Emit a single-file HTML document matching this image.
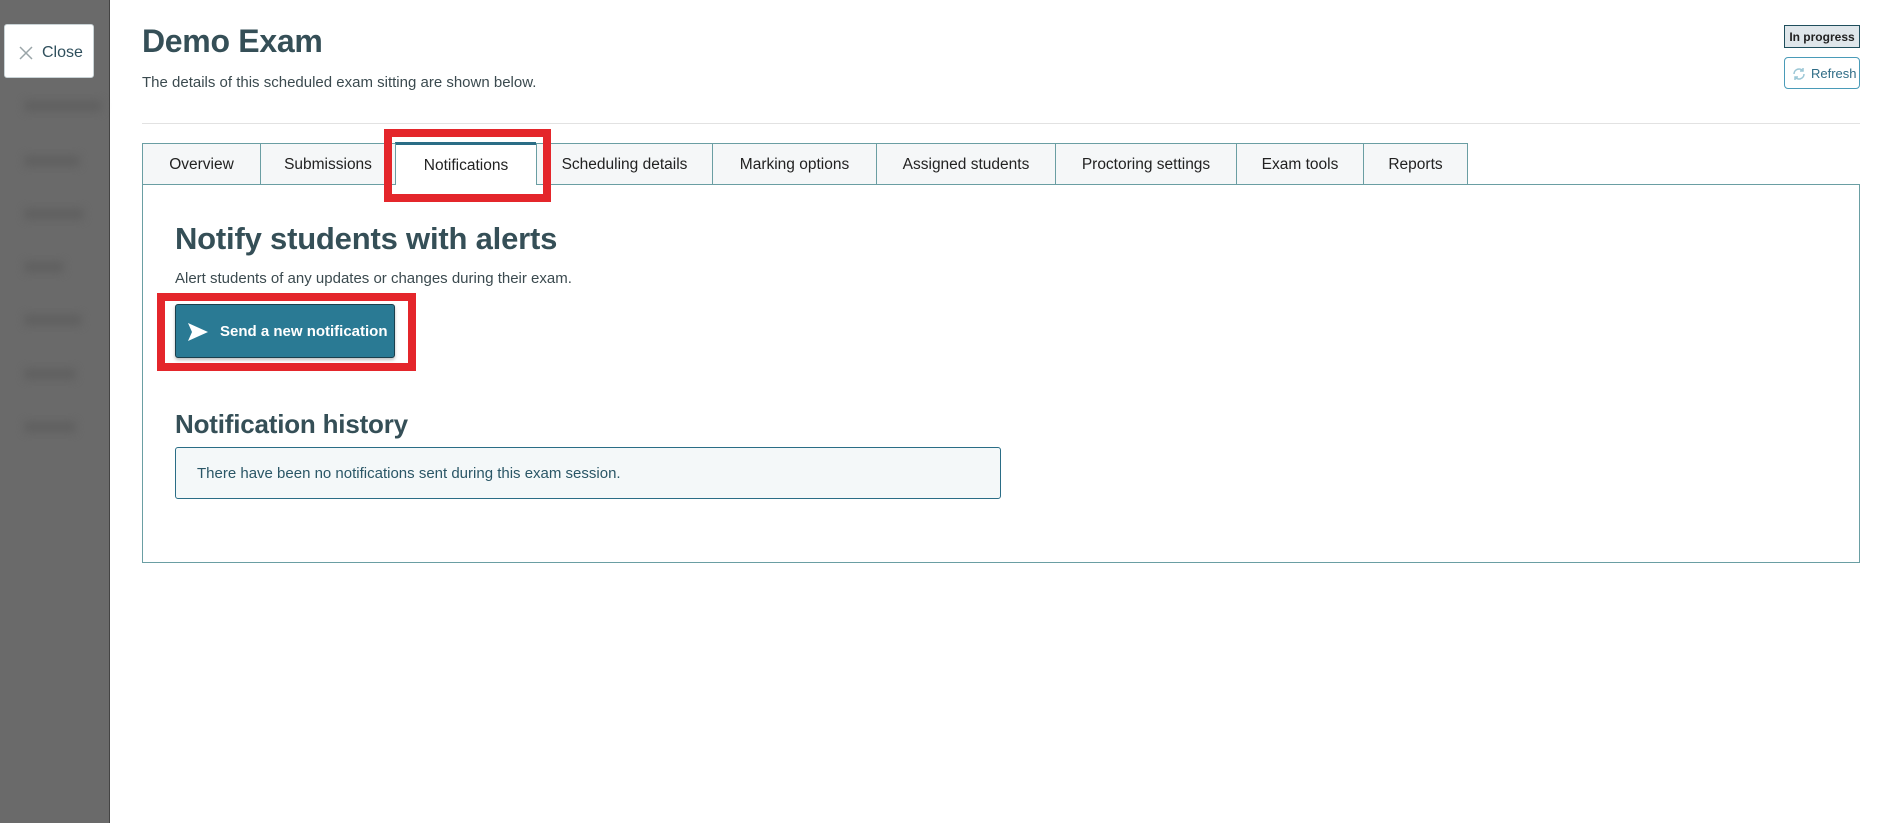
<!DOCTYPE html>
<html><head><meta charset="utf-8"><style>
*{box-sizing:border-box;margin:0;padding:0}
body{width:1884px;height:823px;background:#fff;font-family:"Liberation Sans",sans-serif;position:relative;overflow:hidden;color:#3b4a4f}
.side{position:absolute;left:0;top:0;width:110px;height:823px;background:#6a6a6a;border-right:1px solid #444}
.blob{position:absolute;left:24px;height:12px;background:#616161;filter:blur(4px);border-radius:4px}
.close{position:absolute;left:4px;top:24px;width:90px;height:54px;background:#fff;border:1px solid #c9d3d6;border-radius:3px;font-size:16px;color:#2f4f5c;display:flex;align-items:center;padding-left:14px;padding-top:3px}
.abs{position:absolute}
h1{position:absolute;left:142px;top:23px;font-size:32px;font-weight:bold;color:#354f57;letter-spacing:-0.3px}
.sub{left:142px;top:74px;font-size:15px;color:#3b4a4f}
.hr{left:142px;top:123px;width:1718px;height:1px;background:#e2e2e2}
.badge{left:1784px;top:25px;width:76px;height:23px;background:#dfe6ea;border:1px solid #1f4e5c;font-size:12px;font-weight:bold;color:#222;text-align:center;line-height:22px}
.refresh{left:1784px;top:57px;width:76px;height:32px;border:1px solid #4a9bb8;border-radius:4px;font-size:13px;color:#2f6c86;line-height:32px;padding-left:26px}
.tab{position:absolute;top:143px;height:42px;border:1px solid #6a9ea3;border-right:none;background:#f5f7f8;font-size:15.5px;color:#222;text-align:center;line-height:42px}
.panel{left:142px;top:184px;width:1718px;height:379px;border:1px solid #6a9ea3}
.red{position:absolute;border:8px solid #e4262b}
h2{position:absolute;left:175px;top:221px;font-size:31px;font-weight:bold;color:#354f57;letter-spacing:-0.2px}
h3{position:absolute;left:175px;top:409px;font-size:26px;font-weight:bold;color:#354f57;letter-spacing:-0.2px}
.btn{left:175px;top:304px;width:220px;height:54px;background:#2a7a94;border:1px solid #1b3f4c;border-radius:3px;color:#fff;font-size:15px;font-weight:bold;line-height:54px;padding-left:44px;box-shadow:0 2px 3px rgba(0,0,0,.25)}
.info{left:175px;top:447px;width:826px;height:52px;background:#f4f8f9;border:1px solid #2a6d86;border-radius:3px;font-size:15px;color:#2a5666;line-height:52px;padding-left:21px}
</style></head><body>
<div class="side">
<div class="blob" style="top:100px;width:78px"></div>
<div class="blob" style="top:155px;width:56px"></div>
<div class="blob" style="top:208px;width:60px"></div>
<div class="blob" style="top:261px;width:40px"></div>
<div class="blob" style="top:314px;width:58px"></div>
<div class="blob" style="top:368px;width:52px"></div>
<div class="blob" style="top:421px;width:52px"></div>
</div>
<div class="close"><svg width="14" height="14" viewBox="0 0 14 14" style="margin-right:9px"><path d="M1 1L13 13M13 1L1 13" stroke="#9aa5a8" stroke-width="1.5"/></svg>Close</div>
<h1>Demo Exam</h1>
<div class="abs sub">The details of this scheduled exam sitting are shown below.</div>
<div class="abs hr"></div>
<div class="abs badge">In progress</div>
<div class="abs refresh"><svg class="abs" style="left:7px;top:9px" width="14" height="14" viewBox="0 0 14 14"><path d="M2 7A5 5 0 0 1 11 4M12 7A5 5 0 0 1 3 10" stroke="#9cc7d6" stroke-width="1.5" fill="none"/><path d="M11 1V4H8M3 13V10H6" stroke="#9cc7d6" stroke-width="1.5" fill="none"/></svg>Refresh</div>
<div class="abs panel"></div>
<div class="tab" style="left:142px;width:118px">Overview</div>
<div class="tab" style="left:260px;width:135px">Submissions</div>
<div class="tab" style="left:395px;width:141px;background:#fff;border-top:3px solid #2a6d86;border-bottom:none;height:43px;top:142px;line-height:41px">Notifications</div>
<div class="tab" style="left:536px;width:176px">Scheduling details</div>
<div class="tab" style="left:712px;width:164px">Marking options</div>
<div class="tab" style="left:876px;width:179px">Assigned students</div>
<div class="tab" style="left:1055px;width:181px">Proctoring settings</div>
<div class="tab" style="left:1236px;width:127px">Exam tools</div>
<div class="tab" style="left:1363px;width:105px;border-right:1px solid #6a9ea3">Reports</div>
<div class="red" style="left:384px;top:129px;width:167px;height:73px"></div>
<h2>Notify students with alerts</h2>
<div class="abs" style="left:175px;top:270px;font-size:15px">Alert students of any updates or changes during their exam.</div>
<div class="abs btn"><svg class="abs" style="left:12px;top:18px" width="20" height="18" viewBox="0 0 20 18"><path d="M0 0L20 9L0 18L4 9Z" fill="#fff"/></svg>Send a new notification</div>
<div class="red" style="left:157px;top:293px;width:259px;height:78px"></div>
<h3>Notification history</h3>
<div class="abs info">There have been no notifications sent during this exam session.</div>
</body></html>
